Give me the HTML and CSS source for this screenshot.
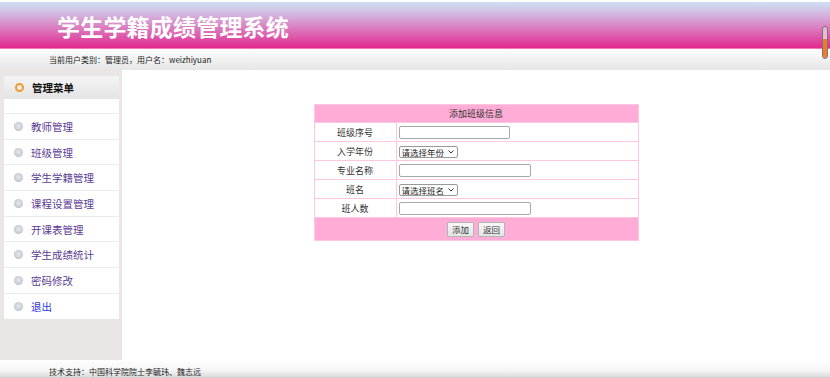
FILE: index.html
```html
<!DOCTYPE html>
<html lang="zh-CN">

<head>
	<meta charset="UTF-8">
	<title>学生学籍成绩管理系统</title>
	<link rel="stylesheet" href="styles.css">
</head>

<body>
	<div class="header">
		<h1 class="title">学生学籍成绩管理系统</h1>
	</div>
	<div class="userbar">当前用户类别：管理员，用户名：weizhiyuan</div>

	<div class="main">
		<div class="sidebar">
			<div class="menu">
				<div class="menu-head"><span class="ring"></span>管理菜单</div>
				<div class="menu-gap"></div>
				<a class="menu-item" href="#"><span class="dot"></span>教师管理</a>
				<a class="menu-item" href="#"><span class="dot"></span>班级管理</a>
				<a class="menu-item" href="#"><span class="dot"></span>学生学籍管理</a>
				<a class="menu-item" href="#"><span class="dot"></span>课程设置管理</a>
				<a class="menu-item" href="#"><span class="dot"></span>开课表管理</a>
				<a class="menu-item" href="#"><span class="dot"></span>学生成绩统计</a>
				<a class="menu-item" href="#"><span class="dot"></span>密码修改</a>
				<a class="menu-item logout" href="#"><span class="dot"></span>退出</a>
			</div>
		</div>

		<div class="content">
			<table class="form-table">
				<tr class="row-head">
					<td colspan="2">添加班级信息</td>
				</tr>
				<tr>
					<td class="label">班级序号</td>
					<td><input type="text" class="short"></td>
				</tr>
				<tr>
					<td class="label">入学年份</td>
					<td>
						<select>
							<option>请选择年份</option>
						</select>
					</td>
				</tr>
				<tr>
					<td class="label">专业名称</td>
					<td><input type="text" class="long"></td>
				</tr>
				<tr>
					<td class="label">班名</td>
					<td>
						<select>
							<option>请选择班名</option>
						</select>
					</td>
				</tr>
				<tr>
					<td class="label">班人数</td>
					<td><input type="text" class="long"></td>
				</tr>
				<tr class="row-foot">
					<td colspan="2">
						<button type="button">添加</button>
						<button type="button">返回</button>
					</td>
				</tr>
			</table>
		</div>
	</div>

	<div class="footer">技术支持：中国科学院院士李毓玮、魏志远</div>

	<!-- scroll thumb drawn over the header -->
	<div class="scroll-thumb"><span></span></div>
</body>

</html>
```

FILE: styles.css
```css
:root {
	--cjk: "Noto Sans CJK SC", "Noto Sans", sans-serif;
	--pink-border: #ffc6df;
	--pink-fill: #ffadd6;
	--side-gray: #e9e6e5;
}

body {
	margin: 0;
	padding: 0;
	font-family: var(--cjk);
	color: #333;
	background: #fff;
	height: 378px;
	overflow: hidden;
}

.header {
	height: 46px;
	margin-top: 2px;
	background: linear-gradient(#cde0f4, #d4b0dc 30%, #dc6cb6 65%, #e2288e);
	border-bottom: 1px solid #ee79b8;
}

.title {
	margin: 0;
	padding: 10px 0 0 57px;
	font-size: 23px;
	line-height: 28px;
	font-weight: bold;
	color: #fff;
	letter-spacing: 0.2px;
}

.userbar {
	height: 21px;
	padding-left: 49px;
	font-size: 8px;
	line-height: 22px;
	color: #222;
	background: linear-gradient(#fdfdfd, #e6e6e6);
}

.main {
	display: flex;
	height: 290px;
}

.sidebar {
	width: 115px;
	padding: 6px 3px 0 4px;
	background: var(--side-gray);
}

.menu {
	background: #fff;
	border-radius: 0 0 2px 2px;
}

.menu-head {
	display: flex;
	align-items: center;
	height: 23px;
	padding-left: 11px;
	font-size: 10.5px;
	font-weight: bold;
	color: #111;
	background: linear-gradient(#f4f4f4, #e4e4e4);
}

.ring {
	width: 5px;
	height: 5px;
	border: 2px solid #f29a2e;
	border-radius: 50%;
	margin-right: 8px;
}

.menu-gap {
	height: 14px;
	border-bottom: 1px solid #ececec;
}

.menu-item {
	display: flex;
	align-items: center;
	height: 24.7px;
	padding-left: 10px;
	font-size: 10.5px;
	color: #5a3b92;
	text-decoration: none;
	border-bottom: 1px solid #ececec;
}

.menu-item:last-child {
	border-bottom: none;
}

.menu-item.logout {
	color: #2f36e6;
}

.dot {
	width: 9px;
	height: 9px;
	border-radius: 50%;
	margin-right: 8px;
	background: radial-gradient(circle at 50% 45%, #e6e9ee 0, #cdd1d8 50%, #a9afba 100%);
}

.content {
	flex: 1;
	display: flex;
	justify-content: center;
	align-items: flex-start;
	padding-top: 34px;
}

.form-table {
	width: 325px;
	border-collapse: collapse;
	font-size: 9px;
	color: #333;
}

.form-table td {
	border: 1px solid var(--pink-border);
	padding: 0 2px;
	height: 18px;
}

.form-table .label {
	width: 77px;
	text-align: center;
}

.row-head td {
	background: var(--pink-fill);
	text-align: center;
	height: 17px;
}

.row-foot td {
	background: var(--pink-fill);
	text-align: center;
	height: 22px;
}

input {
	height: 11px;
	border: 1px solid #a9a9a9;
	border-radius: 2px;
	padding: 0 2px;
	vertical-align: middle;
}

input.short {
	width: 105px;
}

input.long {
	width: 126px;
}

select {
	appearance: none;
	-webkit-appearance: none;
	font-family: var(--cjk);
	font-size: 8.5px;
	line-height: 10px;
	width: 59px;
	height: 12px;
	padding: 0 0 0 2px;
	border: 1px solid #999;
	border-radius: 2px;
	color: #222;
	background: #fff url("data:image/svg+xml,%3Csvg xmlns='http://www.w3.org/2000/svg' width='6' height='4' viewBox='0 0 6 4'%3E%3Cpath d='M0.5 0.5 L3 3 L5.5 0.5' fill='none' stroke='%23333' stroke-width='1'/%3E%3C/svg%3E") no-repeat right 3px center;
	vertical-align: middle;
}

button {
	font-family: var(--cjk);
	font-size: 8.5px;
	height: 15px;
	width: 27px;
	padding: 0;
	margin: 0 1px;
	border: 1px solid #b5b5b5;
	border-radius: 1px;
	background: linear-gradient(#f8f8f8, #e3e3e3);
	color: #333;
	vertical-align: middle;
}

.footer {
	height: 17px;
	padding-left: 49px;
	font-size: 8px;
	line-height: 24px;
	color: #222;
	background: linear-gradient(#fefefe, #f6f6f6 60%, #dcdcdc);
	border-bottom: 1px solid #cfcfcf;
}

.scroll-thumb {
	position: absolute;
	top: 26px;
	right: 2px;
	width: 4px;
	height: 31px;
	border: 1px solid #777;
	border-radius: 3px;
	background: #e9b9d8;
	overflow: hidden;
	display: flex;
	align-items: flex-end;
}

.scroll-thumb span {
	display: block;
	width: 100%;
	height: 19px;
	background: #f07a2c;
}
```
